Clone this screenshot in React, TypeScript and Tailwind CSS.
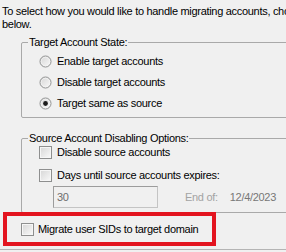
import React from "react";

function Radio({ checked }: { checked?: boolean }) {
  return (
    <svg width="13" height="13" viewBox="0 0 13 13" className="shrink-0">
      <defs>
        <linearGradient id="rg" x1="0" y1="0" x2="1" y2="1">
          <stop offset="0" stopColor="#d4d4d4" />
          <stop offset="1" stopColor="#fbfbfb" />
        </linearGradient>
      </defs>
      <circle cx="6.5" cy="6.5" r="5.5" fill="url(#rg)" stroke="#8e8f8f" strokeWidth="1" />
      <circle cx="6.5" cy="6.5" r="4.3" fill="none" stroke="#f4f4f4" strokeWidth="0.8" />
      {checked && <circle cx="6.5" cy="6.5" r="2.4" fill="#1c1c1c" />}
    </svg>
  );
}

function Check() {
  return (
    <div className="w-[13px] h-[13px] shrink-0 border border-[#8e8f8f] bg-gradient-to-br from-[#d6d6d6] to-[#fafafa] shadow-[inset_0_0_0_1px_#f6f6f6]" />
  );
}

export default function App() {
  return (
    <div className="relative w-[286px] h-[252px] overflow-hidden bg-[#f0f0f0] text-black text-[11px] leading-[13px] tracking-[-0.3px] font-['Liberation_Sans',Arial,sans-serif]">
      <div className="pt-[5px] pl-[2px]">
        <div className="whitespace-nowrap">To select how you would like to handle migrating accounts, choose</div>
        <div>below.</div>
      </div>

      <div className="relative mt-[11px] ml-[21px] w-[300px] h-[76px] border border-[#a9a9a9] rounded-[2px]">
        <div className="absolute left-[6px] top-[-7px] px-[1px] bg-[#f0f0f0]">Target Account State:</div>
        <div className="pt-[8px] pl-[17px]">
          <div className="h-[21px] flex items-center gap-[5px]">
            <Radio />
            <span>Enable target accounts</span>
          </div>
          <div className="h-[21px] flex items-center gap-[5px]">
            <Radio />
            <span>Disable target accounts</span>
          </div>
          <div className="h-[21px] flex items-center gap-[5px]">
            <Radio checked />
            <span>Target same as source</span>
          </div>
        </div>
      </div>

      <div className="relative mt-[20px] ml-[21px] w-[300px] h-[75px] border border-[#a9a9a9] rounded-[2px]">
        <div className="absolute left-[6px] top-[-7px] px-[1px] bg-[#f0f0f0]">Source Account Disabling Options:</div>
        <div className="pt-[2px] pl-[17px]">
          <div className="h-[22px] flex items-center gap-[5px]">
            <Check />
            <span>Disable source accounts</span>
          </div>
          <div className="mt-[1px] h-[22px] flex items-center gap-[5px]">
            <Check />
            <span>Days until source accounts expires:</span>
          </div>
        </div>
        <div className="flex items-center h-[22px] pl-[31px]">
          <div className="w-[105px] h-[22px] border border-[#c4c4c4] border-t-[#9c9c9c] border-l-[#9c9c9c] flex items-center pl-[3px] text-[#6d6d6d]">
            30
          </div>
          <span className="ml-[27px] text-[#a3a3a3]">End of:</span>
          <span className="ml-[12px] text-[#777777]">12/4/2023</span>
        </div>
      </div>

      <div className="relative z-10 mt-[-1px] ml-[3px] w-[213px] h-[34px] border-[4px] border-[#e3141f] flex items-center gap-[4px] pl-[14px]">
        <Check />
        <span>Migrate user SIDs to target domain</span>
      </div>

      <div className="mt-[3px] h-px w-full bg-[#b4b4b4]" />
    </div>
  );
}
